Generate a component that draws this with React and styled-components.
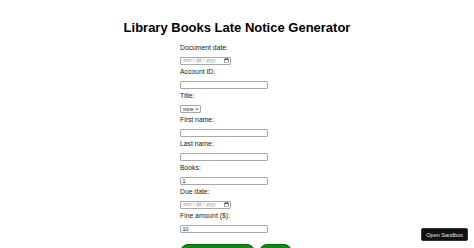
import styled, { createGlobalStyle } from "styled-components";

const GlobalStyle = createGlobalStyle`
  html, body {
    margin: 0;
    padding: 0;
    background: #ffffff;
    font-family: "Liberation Sans", Arial, sans-serif;
    color: #1a1a1a;
    overflow: hidden;
  }
`;

const Page = styled.div`
  width: 474px;
  height: 248px;
  padding-top: 20px;
  box-sizing: border-box;
  display: flex;
  flex-direction: column;
  align-items: center;
`;

const Title = styled.h1`
  margin: 0 0 8px;
  font-size: 13px;
  line-height: 15px;
  font-weight: 700;
  color: #000;
`;

const Form = styled.form`
  width: 114px;
  display: flex;
  flex-direction: column;
  align-items: flex-start;
`;

const Field = styled.div`
  display: flex;
  flex-direction: column;
  align-items: flex-start;
  margin-bottom: 2.5px;
`;

const Label = styled.label`
  font-size: 6.8px;
  line-height: 10px;
  margin-bottom: 3.5px;
  color: #1a1a1a;
`;

const TextInput = styled.input`
  box-sizing: border-box;
  width: ${(p) => p.$w || 88}px;
  height: 8px;
  margin: 0;
  padding: 0 1.5px;
  border: 1px solid #a8a8a8;
  border-radius: 1px;
  font-family: "Liberation Sans", Arial, sans-serif;
  font-size: ${(p) => (p.type === "date" ? 4.8 : 5.5)}px;
  color: #222;
  background: #fff;
  outline: none;

  &::-webkit-calendar-picker-indicator {
    width: 5px;
    height: 5px;
    padding: 0;
    margin: 0;
  }
  &::-webkit-datetime-edit {
    padding: 0;
    color: #888;
  }
  &::-webkit-datetime-edit-text {
    padding: 0 0.6px;
  }
`;

const SelectWrap = styled.div`
  position: relative;
  width: 21px;
  height: 8px;
`;

const Select = styled.select`
  appearance: none;
  -webkit-appearance: none;
  box-sizing: border-box;
  display: block;
  height: 8px;
  width: 21px;
  margin: 0;
  padding: 0 0 0 1.5px;
  border: 1px solid #a8a8a8;
  border-radius: 1px;
  font-family: "Liberation Sans", Arial, sans-serif;
  font-size: 5px;
  line-height: 6px;
  color: #222;
  background: #fff;
  outline: none;
`;

const Chevron = styled.svg`
  position: absolute;
  right: 2px;
  top: 2px;
  width: 4px;
  height: 4px;
  pointer-events: none;
`;

const Buttons = styled.div`
  display: flex;
  gap: 4px;
  margin-top: 8.5px;
`;

const Button = styled.button`
  height: 16px;
  padding: 0 ${(p) => p.$px || 10}px;
  border: 1px solid #0b5f0b;
  border-radius: 8px;
  background: #138a13;
  color: #fff;
  font-family: "Liberation Sans", Arial, sans-serif;
  font-size: 7px;
  font-weight: 700;
  white-space: nowrap;
`;

const SandboxButton = styled.button`
  position: fixed;
  right: 6px;
  bottom: 7px;
  height: 13px;
  padding: 0 4px;
  border: 1px solid #333;
  border-radius: 2px;
  background: #111;
  color: #e8e8e8;
  font-family: "Liberation Sans", Arial, sans-serif;
  font-size: 5.5px;
`;

const fields = [
  { label: "Document date:", type: "date", w: 51 },
  { label: "Account ID:", type: "text" },
  { label: "Title:", type: "select" },
  { label: "First name:", type: "text" },
  { label: "Last name:", type: "text" },
  { label: "Books:", type: "number", value: "1" },
  { label: "Due date:", type: "date", w: 51 },
  { label: "Fine amount ($):", type: "number", value: "10" },
];

export default function App() {
  return (
    <Page>
      <GlobalStyle />
      <Title>Library Books Late Notice Generator</Title>
      <Form onSubmit={(e) => e.preventDefault()}>
        {fields.map((f, i) => (
          <Field key={i}>
            <Label>{f.label}</Label>
            {f.type === "select" ? (
              <SelectWrap>
                <Select defaultValue="none">
                  <option value="none">none</option>
                  <option value="mr">Mr.</option>
                  <option value="ms">Ms.</option>
                </Select>
                <Chevron viewBox="0 0 10 10">
                  <path
                    d="M1.5 3 L5 6.8 L8.5 3"
                    fill="none"
                    stroke="#111"
                    strokeWidth="2"
                  />
                </Chevron>
              </SelectWrap>
            ) : (
              <TextInput
                type={f.type === "number" ? "text" : f.type}
                $w={f.w}
                defaultValue={f.value}
              />
            )}
          </Field>
        ))}
        <Buttons>
          <Button type="submit" $px={8}>Create document</Button>
          <Button type="reset" $px={6}>Reset</Button>
        </Buttons>
      </Form>
      <SandboxButton type="button">Open Sandbox</SandboxButton>
    </Page>
  );
}
